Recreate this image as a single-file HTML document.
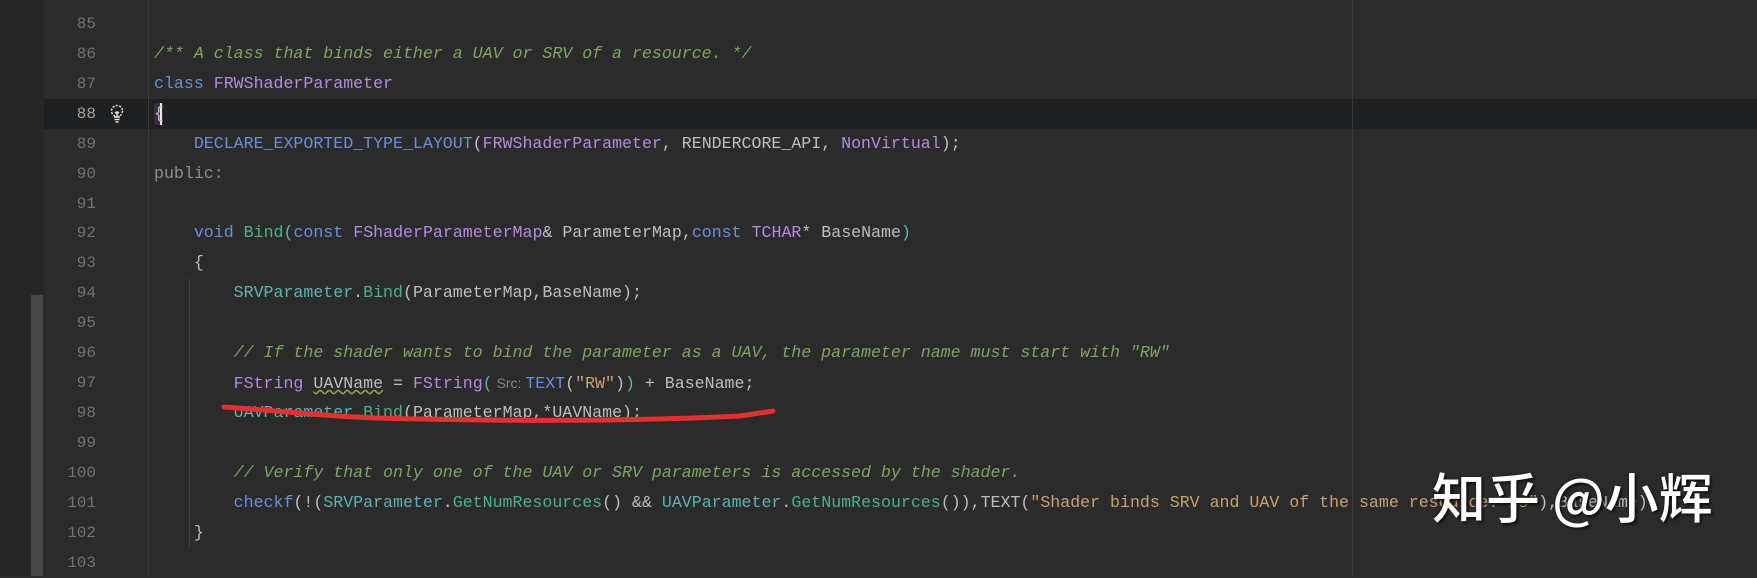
<!DOCTYPE html>
<html><head><meta charset="utf-8"><style>
body{margin:0;width:1757px;height:576px;overflow:hidden;background:#2b2b2b;position:relative;font-family:"Liberation Mono",monospace;}
.l{position:absolute;left:154px;height:30px;line-height:30px;font-size:16.6px;color:#bcbec4;white-space:pre;}
.n{position:absolute;width:96px;text-align:right;left:0;height:30px;line-height:30px;font-size:16px;color:#6f737a;}
.c{color:#7ea561;font-style:italic}.k{color:#6a8fd8}.t{color:#b48ae3}.f{color:#48b386}.m{color:#5cb3b3}.s{color:#c9a26d}.g{color:#8c8c8c}.b{color:#56a8f5}
</style></head><body>
<div style="position:absolute;left:0;top:0;width:44px;height:576px;background:#262626"></div>
<div style="position:absolute;left:31px;top:295px;width:12px;height:281px;background:#474747"></div>
<div style="position:absolute;left:44px;top:99px;width:1713px;height:30px;background:#1f2021"></div>
<div style="position:absolute;left:148px;top:0;width:1px;height:576px;background:#3b3b3b"></div>
<div style="position:absolute;left:1352px;top:0;width:1px;height:576px;background:#3a3a3a"></div>
<div style="position:absolute;left:189px;top:278px;width:1px;height:270px;background:#3e3e3e"></div>
<div style="position:absolute;left:154px;top:103px;width:9px;height:22px;background:#3f2a45"></div>
<div style="position:absolute;left:160px;top:103px;width:2px;height:22px;background:#e8e8e8"></div>
<svg style="position:absolute;left:109px;top:104px" width="16" height="20" viewBox="0 0 16 20"><circle cx="8" cy="7" r="5.5" fill="none" stroke="#ddd" stroke-width="1.5" stroke-dasharray="2 1.5"/><path d="M5 13h6M5.5 15.5h5M6.5 18h3M8 7v5M6 8l2 2 2-2" stroke="#ddd" stroke-width="1.4" fill="none"/></svg>

<div class="l" style="top:-21px">*/</div>
<div class="n" style="top:9px">85</div>
<div class="n" style="top:39px">86</div><div class="l c" style="top:39px">/** A class that binds either a UAV or SRV of a resource. */</div>
<div class="n" style="top:69px">87</div><div class="l" style="top:69px"><span class="k">class</span> <span class="t">FRWShaderParameter</span></div>
<div class="n" style="top:99px;color:#a0a0a0">88</div><div class="l" style="top:99px">{</div>
<div class="n" style="top:129px">89</div><div class="l" style="top:129px">    <span class="k">DECLARE_EXPORTED_TYPE_LAYOUT</span>(<span class="t">FRWShaderParameter</span>, RENDERCORE_API, <span class="t">NonVirtual</span>);</div>
<div class="n" style="top:159px">90</div><div class="l g" style="top:159px">public:</div>
<div class="n" style="top:189px">91</div>
<div class="n" style="top:218px">92</div><div class="l" style="top:218px">    <span class="k">void</span> <span class="f">Bind</span><span class="m">(</span><span class="k">const</span> <span class="t">FShaderParameterMap</span>&amp; ParameterMap,<span class="k">const</span> <span class="t">TCHAR</span>* BaseName<span class="m">)</span></div>
<div class="n" style="top:248px">93</div><div class="l" style="top:248px">    {</div>
<div class="n" style="top:278px">94</div><div class="l" style="top:278px">        <span class="m">SRVParameter</span>.<span class="f">Bind</span>(ParameterMap,BaseName);</div>
<div class="n" style="top:308px">95</div>
<div class="n" style="top:338px">96</div><div class="l c" style="top:338px">        // If the shader wants to bind the parameter as a UAV, the parameter name must start with "RW"</div>
<div class="n" style="top:368px">97</div><div class="l" style="top:368px">        <span class="t">FString</span> <span style="text-decoration:underline wavy #8aa14a">UAVName</span> = <span class="t">FString</span><span class="m">(</span><span style="font-family:'Liberation Sans',sans-serif;font-size:14px;color:#868686"> Src: </span><span class="k">TEXT</span>(<span class="s">"RW"</span>)<span class="m">)</span> + BaseName;</div>
<div class="n" style="top:398px">98</div><div class="l" style="top:398px">        <span class="m">UAVParameter</span>.<span class="f">Bind</span>(ParameterMap,*UAVName);</div>
<div class="n" style="top:428px">99</div>
<div class="n" style="top:458px">100</div><div class="l c" style="top:458px">        // Verify that only one of the UAV or SRV parameters is accessed by the shader.</div>
<div class="n" style="top:488px">101</div><div class="l" style="top:488px">        <span class="k">checkf</span>(!(<span class="m">SRVParameter</span>.<span class="f">GetNumResources</span>() &amp;&amp; <span class="m">UAVParameter</span>.<span class="f">GetNumResources</span>()),TEXT(<span class="s">"Shader binds SRV and UAV of the same resource: %s"</span>),BaseName);</div>
<div class="n" style="top:518px">102</div><div class="l" style="top:518px">    }</div>
<div class="n" style="top:548px">103</div>

<svg style="position:absolute;left:0;top:0" width="1757" height="576"><path d="M224 407 C300 412 330 418 420 419 C520 421 640 421 740 416 L773 411" stroke="#e5302f" stroke-width="5" fill="none" stroke-linecap="round"/></svg>
<div style="position:absolute;left:1432px;top:462px;font-family:'Noto Sans CJK SC',sans-serif;font-size:54px;line-height:66px;color:#fff;font-weight:500;text-shadow:2px 2px 2px #111,-1px -1px 1px #222;white-space:nowrap">知乎 @小辉</div>
</body></html>
